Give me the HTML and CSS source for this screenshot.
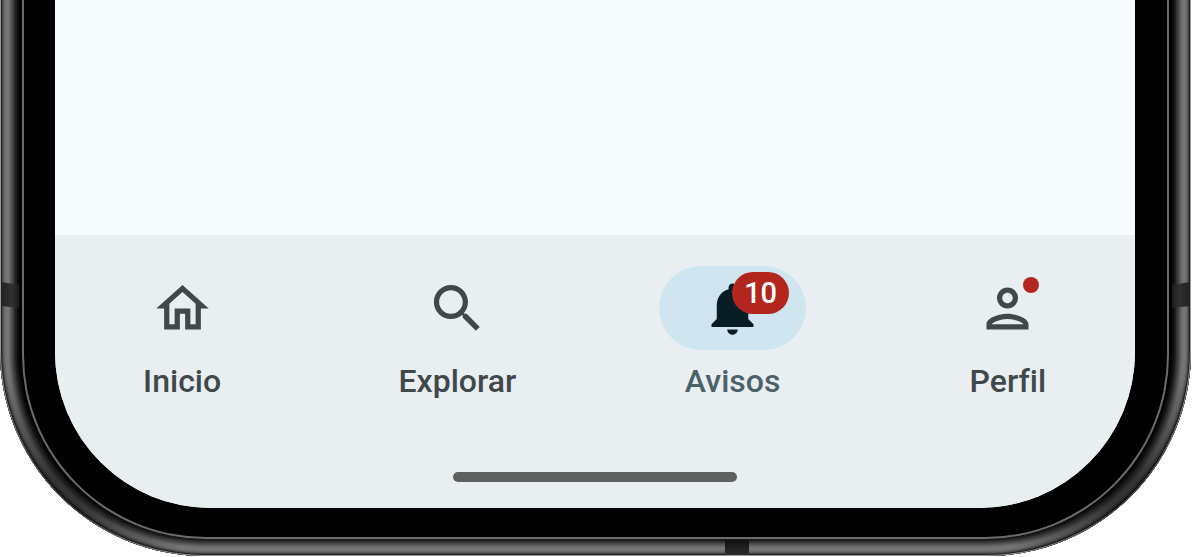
FILE: index.html
```html
<!DOCTYPE html>
<html lang="es">
<head>
<meta charset="utf-8">
<meta name="viewport" content="width=device-width, initial-scale=1">
<title>Avisos</title>
<link rel="stylesheet" href="styles.css">
</head>
<body>
<div class="device">
  <span class="antenna antenna-left"></span>
  <span class="antenna antenna-right"></span>
  <span class="antenna antenna-bottom"></span>
  <div class="bezel">
    <div class="screen">
      <main class="content"></main>
      <nav class="nav-bar" aria-label="Principal">
        <div class="destinations">
          <a class="destination" href="#inicio">
            <span class="indicator">
              <svg class="icon" viewBox="0 0 24 24" aria-hidden="true"><path d="M12 5.69l5 4.5V18h-2v-6H9v6H7v-7.81l5-4.5M12 3L2 12h3v8h6v-6h2v6h6v-8h3L12 3z"/></svg>
            </span>
            <span class="label">Inicio</span>
          </a>
          <a class="destination" href="#explorar">
            <span class="indicator">
              <svg class="icon" viewBox="0 0 24 24" aria-hidden="true"><path d="M15.5 14h-.79l-.28-.27C15.41 12.59 16 11.11 16 9.5 16 5.91 13.09 3 9.5 3S3 5.91 3 9.5 5.91 16 9.5 16c1.61 0 3.09-.59 4.23-1.57l.27.28v.79l5 4.99L20.49 19l-4.99-5zm-6 0C7.01 14 5 11.99 5 9.5S7.01 5 9.5 5 14 7.01 14 9.5 11.99 14 9.5 14z"/></svg>
            </span>
            <span class="label">Explorar</span>
          </a>
          <a class="destination selected" href="#avisos" aria-current="page">
            <span class="indicator">
              <svg class="icon" viewBox="0 0 24 24" aria-hidden="true"><path d="M12 22c1.1 0 2-.9 2-2h-4c0 1.1.89 2 2 2zm6-6v-5c0-3.07-1.64-5.64-4.5-6.32V4c0-.83-.67-1.5-1.5-1.5s-1.5.67-1.5 1.5v.68C7.63 5.36 6 7.92 6 11v5l-2 2v1h16v-1l-2-2z"/></svg>
              <span class="badge">10</span>
            </span>
            <span class="label">Avisos</span>
          </a>
          <a class="destination" href="#perfil">
            <span class="indicator">
              <svg class="icon" viewBox="0 0 24 24" aria-hidden="true"><path d="M12 6c1.1 0 2 .9 2 2s-.9 2-2 2-2-.9-2-2 .9-2 2-2m0 10c2.7 0 5.8 1.29 6 2H6c.23-.72 3.31-2 6-2m0-12C9.79 4 8 5.79 8 8s1.79 4 4 4 4-1.79 4-4-1.79-4-4-4zm0 10c-2.67 0-8 1.34-8 4v2h16v-2c0-2.66-5.33-4-8-4z"/></svg>
              <span class="dot"></span>
            </span>
            <span class="label">Perfil</span>
          </a>
        </div>
        <div class="home-handle"></div>
      </nav>
    </div>
  </div>
</div>
</body>
</html>
```

FILE: styles.css
```css
* {
  box-sizing: border-box;
}

body {
  margin: 0;
  padding: 0 7px 1px 0;
  min-height: 100vh;
  display: flex;
  overflow: hidden;
  background: #fff;
  font-family: Roboto, "Liberation Sans", sans-serif;
}

/* Metal band: the rings go from the outer edge inwards */
.device {
  position: relative;
  flex: 1;
  display: flex;
  margin-top: -24px;
  padding: 24px 22px 17px;
  border-radius: 0 0 205px 205px;
  background: #000;
  box-shadow:
    inset 0 0 0 1px #9a9a9a,
    inset 0 0 0 2px #1f1f1f,
    inset 0 0 0 3px #444,
    inset 0 0 0 4px #5a5a5a,
    inset 0 0 0 5px #686868,
    inset 0 0 0 9px #747474,
    inset 0 0 0 10px #696969,
    inset 0 0 0 11px #5e5e5e,
    inset 0 0 0 12px #525252,
    inset 0 0 0 13px #454545,
    inset 0 0 0 14px #3a3a3a,
    inset 0 0 0 15px #303030,
    inset 0 0 0 17px #1c1c1c,
    inset 0 0 0 19px #0c0c0c;
}

/* Shade on the two rounded corners */
.device::before {
  content: "";
  position: absolute;
  inset: 0;
  border-radius: inherit;
  background:
    radial-gradient(circle at 61px calc(100% - 60px), rgba(0, 0, 0, 0.55) 20px, transparent 130px),
    radial-gradient(circle at calc(100% - 61px) calc(100% - 60px), rgba(0, 0, 0, 0.55) 20px, transparent 130px);
}

.antenna {
  position: absolute;
}

.antenna-left,
.antenna-right {
  bottom: 248px;
  width: 18px;
  height: 26px;
}

.antenna-left {
  left: 1px;
  background: linear-gradient(90deg, #222, #303030 60%, #1c1c1c);
  clip-path: polygon(0 0, 100% 3px, 100% 100%, 0 calc(100% - 2px));
}

.antenna-right {
  right: 1px;
  background: linear-gradient(270deg, #222, #303030 60%, #1c1c1c);
  clip-path: polygon(0 3px, 100% 0, 100% calc(100% - 2px), 0 100%);
}

.antenna-bottom {
  left: 725px;
  bottom: 1px;
  width: 24px;
  height: 15px;
  background: linear-gradient(#111, #2c2c2c);
}

.bezel {
  position: relative;
  flex: 1;
  display: flex;
  padding: 0 32px 29px 31px;
  border: 2px solid #6b6b6b;
  border-top: 0;
  border-radius: 0 0 184px 184px;
  background: #000;
}

.screen {
  flex: 1;
  display: flex;
  flex-direction: column;
  overflow: hidden;
  border-radius: 0 0 156px 156px;
  background: #f5fafd;
}

.content {
  flex: 1;
}

.nav-bar {
  display: flex;
  flex-direction: column;
  align-items: center;
  gap: 70px;
  padding: 31px 0 26px;
  background: #e9eff1;
}

.destinations {
  align-self: stretch;
  display: grid;
  grid-template-columns: repeat(4, 1fr);
  gap: 21px;
}

.destination {
  display: flex;
  flex-direction: column;
  align-items: center;
  gap: 10px;
  color: #40484b;
  text-decoration: none;
}

.indicator {
  position: relative;
  display: flex;
  align-items: center;
  justify-content: center;
  width: 147px;
  height: 84px;
  border-radius: 42px;
}

.icon {
  width: 63px;
  height: 63px;
  fill: currentColor;
}

.label {
  font-size: 32px;
  font-weight: 500;
  line-height: 42px;
  font-variant-ligatures: none;
}

.selected {
  color: #4c626b;
}

.selected .indicator {
  background: #cfe6f1;
  color: #071e26;
}

.badge {
  position: absolute;
  top: 6px;
  left: 73px;
  min-width: 57px;
  height: 42px;
  border-radius: 21px;
  background: #b3261e;
  color: #fff;
  font-size: 29px;
  font-weight: 500;
  line-height: 42px;
  text-align: center;
}

.dot {
  position: absolute;
  top: 11px;
  left: 89px;
  width: 16px;
  height: 16px;
  border-radius: 50%;
  background: #b3261e;
}

.home-handle {
  width: 284px;
  height: 10px;
  border-radius: 5px;
  background: #5f6060;
}
```
